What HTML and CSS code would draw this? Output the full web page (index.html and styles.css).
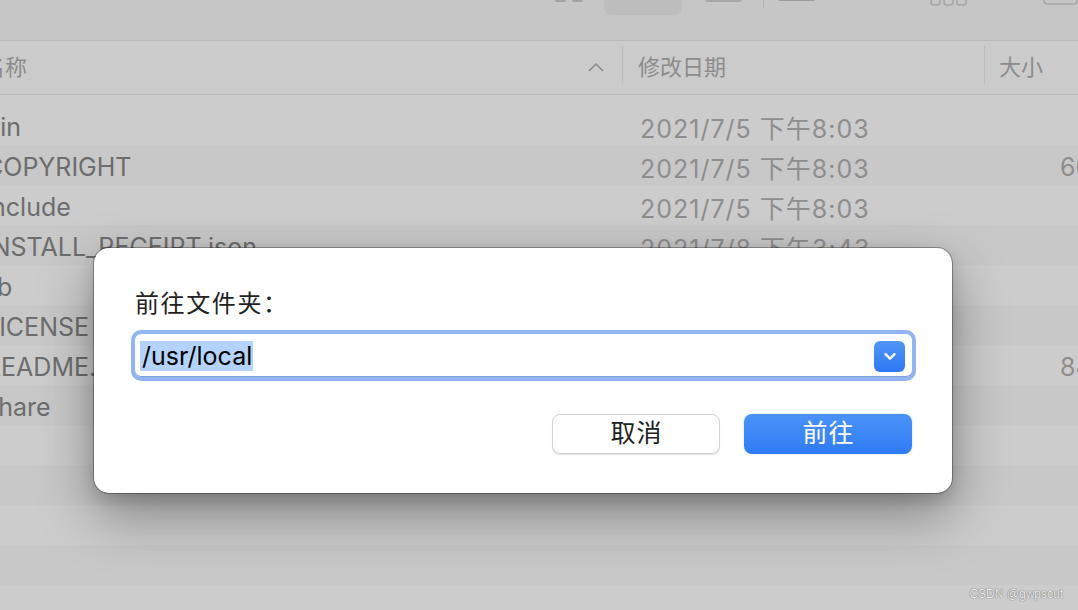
FILE: index.html
```html
<!DOCTYPE html>
<html lang="zh-CN">
<head>
<meta charset="utf-8">
<title>前往文件夹</title>
<link rel="stylesheet" href="styles.css">
</head>
<body>
<div class="finder">
  <div class="toolbar">
    <svg class="toolbar-art" width="1078" height="40" viewBox="0 0 1078 40">
      <rect x="555" y="-6" width="11" height="8" rx="2" fill="#a3a3a3"/>
      <rect x="572" y="-6" width="11" height="8" rx="2" fill="#a3a3a3"/>
      <rect x="604" y="-10" width="78" height="25" rx="8" fill="#bdbdbd"/>
      <rect x="705" y="-6" width="37" height="8" rx="3" fill="#a8a8a8"/>
      <rect x="763" y="0" width="1" height="8" fill="#b3b3b3"/>
      <rect x="779" y="-2" width="36" height="3" rx="1" fill="#9d9d9d"/>
      <rect x="931" y="-6" width="9" height="11" rx="2.5" fill="none" stroke="#a6a6a6" stroke-width="1.6"/>
      <rect x="944" y="-6" width="9" height="11" rx="2.5" fill="none" stroke="#a6a6a6" stroke-width="1.6"/>
      <rect x="957" y="-6" width="9" height="11" rx="2.5" fill="none" stroke="#a6a6a6" stroke-width="1.6"/>
      <rect x="1044" y="-10" width="33" height="14" rx="3.5" fill="none" stroke="#a6a6a6" stroke-width="1.6"/>
    </svg>
  </div>
  <div class="table">
    <div class="header">
      <div class="hcell hname"><span>名称</span>
        <svg class="sort" width="16" height="10" viewBox="0 0 16 10"><path d="M1.5 8.5 L8 2 L14.5 8.5" fill="none" stroke="#8b8b8b" stroke-width="1.6" stroke-linecap="round" stroke-linejoin="round"/></svg>
      </div>
      <div class="hcell hdate">修改日期</div>
      <div class="hcell hsize">大小</div>
    </div>
    <div class="rows">
      <div class="row"><span class="name">bin</span><span class="date">2021/7/5 下午8:03</span><span class="size"></span></div>
      <div class="row alt"><span class="name">COPYRIGHT</span><span class="date">2021/7/5 下午8:03</span><span class="size">60 KB</span></div>
      <div class="row"><span class="name">include</span><span class="date">2021/7/5 下午8:03</span><span class="size"></span></div>
      <div class="row alt"><span class="name">INSTALL_RECEIPT.json</span><span class="date">2021/7/8 下午3:43</span><span class="size"></span></div>
      <div class="row"><span class="name">lib</span><span class="date">2021/7/5 下午8:03</span><span class="size"></span></div>
      <div class="row alt"><span class="name">LICENSE</span><span class="date">2021/7/5 下午8:03</span><span class="size"></span></div>
      <div class="row"><span class="name">README.md</span><span class="date">2021/7/5 下午8:03</span><span class="size">84 KB</span></div>
      <div class="row alt"><span class="name">share</span><span class="date">2021/7/5 下午8:03</span><span class="size"></span></div>
      <div class="row"></div>
      <div class="row alt"></div>
      <div class="row"></div>
      <div class="row alt"></div>
      <div class="row"></div>
    </div>
  </div>

  <div class="dialog">
    <div class="label">前往文件夹：</div>
    <div class="field">
      <div class="field-inner">
        <span class="value">/usr/local</span>
        <span class="drop">
          <svg width="14" height="9" viewBox="0 0 14 9"><path d="M2.5 2.2 L7 6.6 L11.5 2.2" fill="none" stroke="#ffffff" stroke-width="2.4" stroke-linecap="round" stroke-linejoin="round"/></svg>
        </span>
      </div>
    </div>
    <div class="actions">
      <button class="btn cancel">取消</button>
      <button class="btn go">前往</button>
    </div>
  </div>

  <div class="watermark">CSDN @gwpscut</div>
</div>
</body>
</html>
```
FILE: styles.css
```css
html, body {
  margin: 0;
  padding: 0;
}
body {
  width: 1078px;
  height: 610px;
  overflow: hidden;
  background: #c8c8c8;
  font-family: Inter, "Noto Sans CJK SC", sans-serif;
}
.finder {
  position: relative;
  width: 1078px;
  height: 610px;
  overflow: hidden;
}
.toolbar {
  height: 40px;
  background: #c6c6c6;
  border-bottom: 1px solid #bababa;
}
.toolbar-art {
  display: block;
}
.table {
  margin-left: -17px;
  width: 1200px;
}
.header {
  display: grid;
  grid-template-columns: 640px 362px 1fr;
  height: 54px;
  box-sizing: border-box;
  padding-bottom: 6px;
  background: #cbcbcb;
  border-bottom: 1px solid #bbbbbb;
  align-items: center;
  color: #8c8c8c;
  font-size: 22px;
}
.hcell {
  display: flex;
  align-items: center;
  height: 38px;
}
.hname {
  justify-content: space-between;
  padding-right: 18px;
  border-right: 1px solid #bdbdbd;
}
.sort {
  margin-top: 4px;
}
.hdate {
  padding-left: 15px;
  border-right: 1px solid #bdbdbd;
}
.hsize {
  padding-left: 14px;
}
.rows {
  padding-top: 10px;
  background: #cbcbcb;
}
.row {
  display: grid;
  grid-template-columns: 640px 362px 1fr;
  height: 40px;
  box-sizing: border-box;
  padding-top: 3px;
  align-items: center;
  font-size: 25px;
  background: #cccccc;
}
.row.alt {
  background: #c8c8c8;
}
.name {
  padding-left: 2px;
  color: #6d6d6d;
  white-space: nowrap;
  overflow: hidden;
}
.date {
  padding-left: 17px;
  color: #8e8e8e;
  white-space: nowrap;
  letter-spacing: 1px;
}
.size {
  padding-left: 75px;
  color: #8e8e8e;
  white-space: nowrap;
}

.dialog {
  position: absolute;
  left: 94px;
  top: 248px;
  width: 858px;
  height: 245px;
  box-sizing: border-box;
  background: #ffffff;
  border-radius: 15px;
  box-shadow: 0 0 0 1px rgba(0, 0, 0, 0.3), 0 22px 55px rgba(0, 0, 0, 0.36), 0 6px 16px rgba(0, 0, 0, 0.14);
  padding: 40px 36px 0 37px;
}
.label {
  padding-left: 4px;
  font-size: 24px;
  letter-spacing: 1.6px;
  line-height: 32px;
  color: #222222;
}
.field {
  margin-top: 10px;
  padding: 4px;
  border-radius: 10px;
  background: #93b4f2;
}
.field-inner {
  display: flex;
  align-items: center;
  justify-content: space-between;
  height: 43px;
  background: #ffffff;
  border-radius: 6px;
  padding: 0 7px 0 5px;
  box-shadow: inset 0 -1px 0 #7c9fe6;
}
.value {
  font-size: 25px;
  line-height: 30px;
  color: #000000;
  background: #b4d3fc;
  padding: 0 1px 0 2px;
}
.drop {
  display: flex;
  align-items: center;
  justify-content: center;
  width: 31px;
  height: 31px;
  border-radius: 6px;
  background: linear-gradient(#5196f8, #2d78f5);
  margin-top: 2px;
}
.actions {
  display: flex;
  justify-content: flex-end;
  gap: 24px;
  margin-top: 33px;
  padding-right: 4px;
}
.btn {
  display: flex;
  align-items: center;
  justify-content: center;
  box-sizing: border-box;
  width: 168px;
  height: 40px;
  border-radius: 8px;
  font-family: Inter, "Noto Sans CJK SC", sans-serif;
  font-size: 25px;
  letter-spacing: 1px;
  line-height: 30px;
  padding: 0 0 3px 1px;
  cursor: pointer;
}
.cancel {
  background: #ffffff;
  color: #222222;
  border: 1px solid #d2d2d2;
  box-shadow: 0 1px 1px rgba(0, 0, 0, 0.12);
}
.go {
  background: linear-gradient(#4b93f8, #2f7bf5);
  color: #ffffff;
  border: none;
  box-shadow: 0 0 2px rgba(60, 130, 245, 0.35);
}
.watermark {
  position: absolute;
  right: 15px;
  bottom: 9px;
  font-family: "Liberation Sans", sans-serif;
  font-size: 12px;
  color: #ededed;
  text-shadow: 0 0 1px #6f6f6f, 0 0 1px #6f6f6f;
}
```
